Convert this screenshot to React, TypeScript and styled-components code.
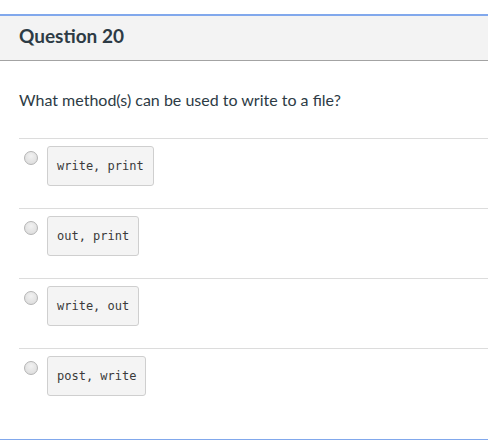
import styled, { createGlobalStyle } from "styled-components";

const GlobalStyle = createGlobalStyle`
  body {
    margin: 0;
    background: #fff;
    font-family: Lato, "Helvetica Neue", Arial, sans-serif;
    color: #2d3b45;
  }
`;

const Page = styled.div`
  width: 488px;
  height: 440px;
  padding-top: 14px;
  box-sizing: border-box;
`;

const Card = styled.div`
  border-top: 2px solid #81a8ec;
  border-bottom: 2px solid #81a8ec;
`;

const Header = styled.div`
  height: 45px;
  box-sizing: border-box;
  padding: 0 0 5px 19px;
  background: #f3f3f3;
  border-bottom: 1px solid #a3a3a3;
  display: flex;
  align-items: center;
`;

const Title = styled.h2`
  margin: 0;
  font-size: 19px;
  font-weight: 700;
  color: #2d3b45;
`;

const Body = styled.div`
  padding: 28px 0 21px 19px;
`;

const QuestionText = styled.div`
  font-size: 16px;
  line-height: 22px;
  margin-bottom: 27px;
`;

const Answer = styled.label`
  display: flex;
  align-items: flex-start;
  gap: 9px;
  border-top: 1px solid #dcdcdc;
  padding: 7px 0 22px 5px;
`;

const Radio = styled.span`
  width: 12px;
  height: 12px;
  margin-top: 5px;
  border-radius: 50%;
  border: 1px solid #b4b4b4;
  background: radial-gradient(circle at 50% 35%, #f2f2f2 0%, #e0e0e0 70%, #d4d4d4 100%);
  flex-shrink: 0;
`;

const Code = styled.code`
  display: inline-block;
  font-family: "DejaVu Sans Mono", "Liberation Mono", monospace;
  font-size: 12px;
  line-height: 16px;
  color: #3a3a3a;
  background: #f4f4f4;
  border: 1px solid #cfcfcf;
  border-radius: 3px;
  padding: 11px 9px;
`;

const answers = ["write, print", "out, print", "write, out", "post, write"];

export default function App() {
  return (
    <Page>
      <GlobalStyle />
      <Card>
        <Header>
          <Title>Question 20</Title>
        </Header>
        <Body>
          <QuestionText>What method(s) can be used to write to a file?</QuestionText>
          <div>
            {answers.map((a) => (
              <Answer key={a}>
                <Radio />
                <Code>{a}</Code>
              </Answer>
            ))}
          </div>
        </Body>
      </Card>
    </Page>
  );
}
